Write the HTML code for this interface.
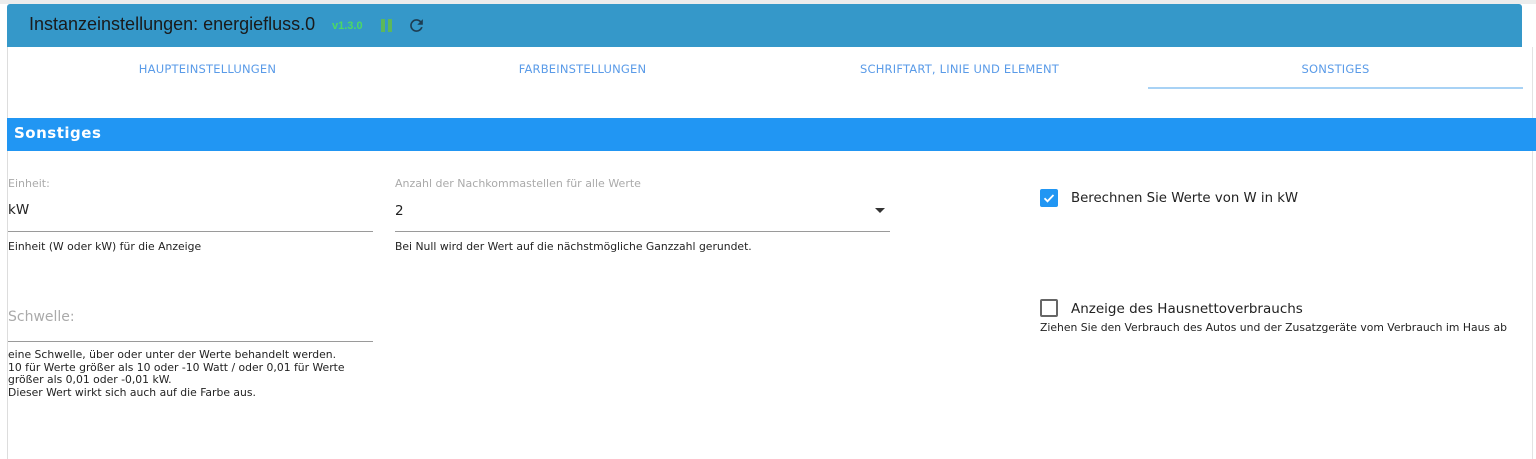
<!DOCTYPE html>
<html><head><meta charset="utf-8"><style>
*{margin:0;padding:0;box-sizing:border-box}
body{width:1536px;height:459px;overflow:hidden;background:#fff;position:relative;font-family:"DejaVu Sans","Liberation Sans",sans-serif;color:#222}
.a{position:absolute;white-space:nowrap}
.s{font-size:10.8px}
.tab{position:absolute;top:62px;font-size:11.5px;color:#5a9be8;letter-spacing:.2px;text-align:center}
.lbl{color:#aaa;font-size:11px}
.line{position:absolute;height:1px;background:#9a9a9a}
</style></head><body>
<div class="a" style="left:0;top:0;width:1536px;height:4px;background:#ececec"></div>
<div class="a" style="left:7px;top:4px;width:1515px;height:43px;background:#3598c9;border-radius:3px 3px 0 0"></div>
<div class="a" style="left:7px;top:47px;width:1px;height:412px;background:#ddd"></div>
<div class="a" style="left:1532px;top:47px;width:1px;height:412px;background:#e3e3e3"></div>
<div class="a" style="left:29px;top:14px;font-family:'Liberation Sans',sans-serif;font-size:18px;color:#1a1a1a">Instanzeinstellungen: energiefluss.0</div>
<div class="a" style="left:332px;top:20px;font-family:'Liberation Sans',sans-serif;font-size:11px;font-weight:bold;color:#4cd964">v1.3.0</div>
<div class="a" style="left:381px;top:19px;width:4px;height:13px;background:#5cb85c"></div>
<div class="a" style="left:388px;top:19px;width:4px;height:13px;background:#5cb85c"></div>
<svg class="a" style="left:407px;top:16px" width="19" height="19" viewBox="0 0 24 24"><path fill="#1d3d52" d="M17.65 6.35A7.96 7.96 0 0 0 12 4a8 8 0 1 0 7.73 10h-2.08A6 6 0 1 1 12 6c1.66 0 3.14.69 4.22 1.78L13 11h7V4z"/></svg>
<div class="tab" style="left:20px;width:375px">HAUPTEINSTELLUNGEN</div>
<div class="tab" style="left:395px;width:375px">FARBEINSTELLUNGEN</div>
<div class="tab" style="left:772px;width:375px">SCHRIFTART, LINIE UND ELEMENT</div>
<div class="tab" style="left:1148px;width:375px">SONSTIGES</div>
<div class="a" style="left:1148px;top:87px;width:375px;height:2px;background:#a8d2f5"></div>
<div class="a" style="left:7px;top:118px;width:1529px;height:33px;background:#2196f3"></div>
<div class="a" style="left:14px;top:124px;color:#fff;font-size:15px;font-weight:bold;letter-spacing:.5px">Sonstiges</div>
<div class="a lbl" style="left:8px;top:177px">Einheit:</div>
<div class="a" style="left:8px;top:202px;font-size:13.5px">kW</div>
<div class="line" style="left:8px;top:231px;width:365px"></div>
<div class="a s" style="left:8px;top:240px">Einheit (W oder kW) für die Anzeige</div>
<div class="a lbl" style="left:8px;top:309px;font-size:14px">Schwelle:</div>
<div class="line" style="left:8px;top:341px;width:365px"></div>
<div class="a s" style="left:8px;top:349px;line-height:12.5px;white-space:normal;width:360px">eine Schwelle, über oder unter der Werte behandelt werden.<br>10 für Werte größer als 10 oder -10 Watt / oder 0,01 für Werte größer als 0,01 oder -0,01 kW.<br>Dieser Wert wirkt sich auch auf die Farbe aus.</div>
<div class="a lbl" style="left:395px;top:177px">Anzahl der Nachkommastellen für alle Werte</div>
<div class="a" style="left:395px;top:203px;font-size:13.5px">2</div>
<div class="a" style="left:875px;top:208px;width:0;height:0;border-left:5px solid transparent;border-right:5px solid transparent;border-top:5px solid #333"></div>
<div class="line" style="left:395px;top:231px;width:495px"></div>
<div class="a s" style="left:395px;top:240px">Bei Null wird der Wert auf die nächstmögliche Ganzzahl gerundet.</div>
<div class="a" style="left:1040px;top:189px;width:18px;height:18px;background:#2196f3;border-radius:2px"></div>
<svg class="a" style="left:1040px;top:189px" width="18" height="18" viewBox="0 0 18 18"><path d="M4.5 9.3l3 3 6-6.3" stroke="#fff" stroke-width="1.8" fill="none"/></svg>
<div class="a" style="left:1071px;top:191px;font-size:13.3px">Berechnen Sie Werte von W in kW</div>
<div class="a" style="left:1040px;top:299px;width:18px;height:18px;border:2px solid #666;border-radius:2px"></div>
<div class="a" style="left:1071px;top:301px;font-size:13.5px">Anzeige des Hausnettoverbrauchs</div>
<div class="a s" style="left:1040px;top:321px">Ziehen Sie den Verbrauch des Autos und der Zusatzgeräte vom Verbrauch im Haus ab</div>
</body></html>
